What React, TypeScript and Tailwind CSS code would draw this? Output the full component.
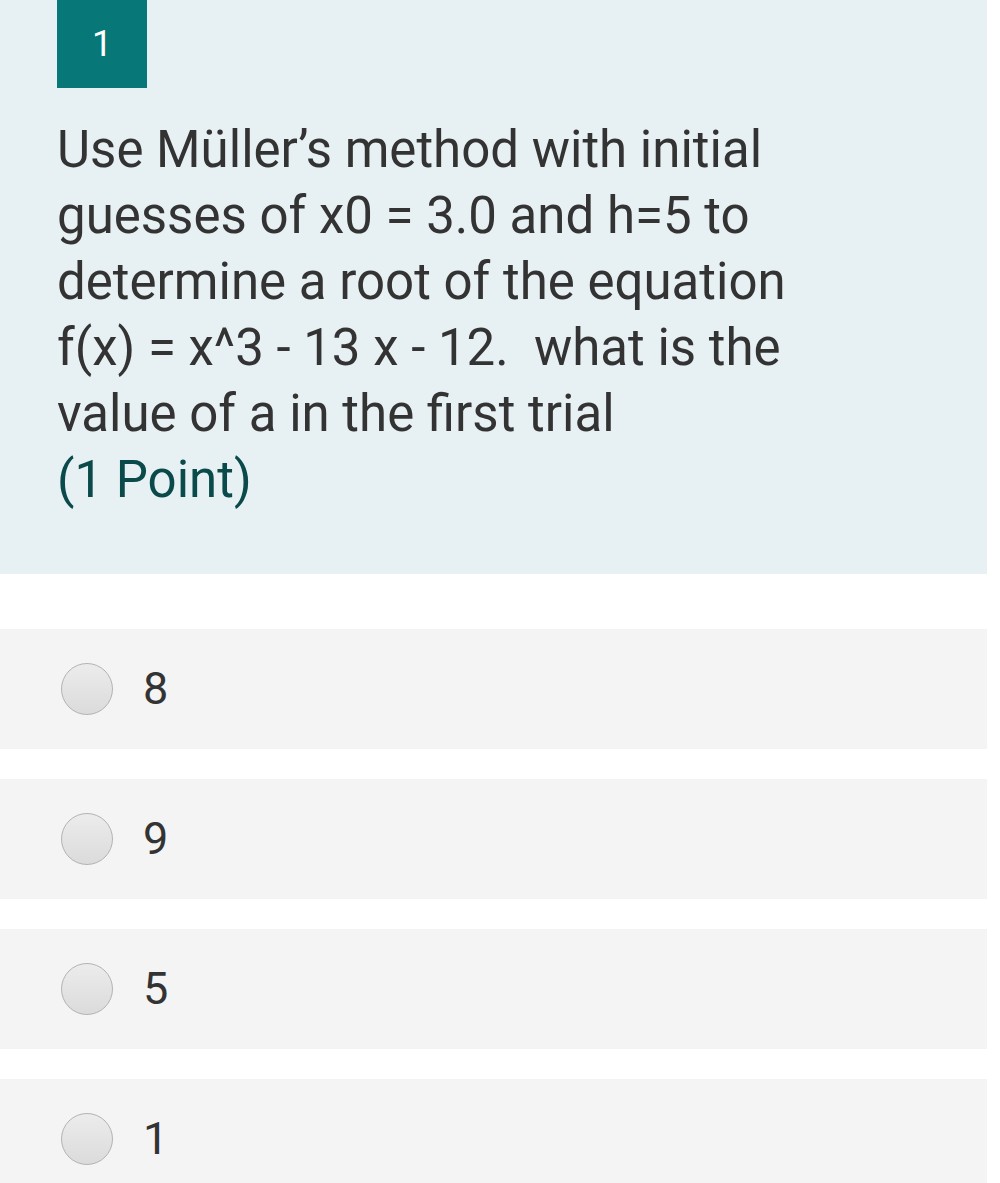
export default function App() {
  const lines = [
    "Use Müller\u2019s method with initial",
    "guesses of x0 = 3.0 and h=5 to",
    "determine a root of the equation",
    "f(x) = x^3 - 13 x - 12.\u00a0 what is the",
    "value of a in the first trial",
  ];
  const options = ["8", "9", "5", "1"];

  return (
    <div className="w-[1000px] h-[1183px] overflow-hidden bg-white font-['Roboto',sans-serif]">
      <div className="w-[987px]">
        <section className="bg-[#e7f0f3] pl-[57px] pb-[61px]">
          <div className="w-[90px] h-[88px] bg-[#077777] flex items-center justify-center text-white text-[36px]">
            1
          </div>
          <div className="mt-[29px] text-[51px] leading-[66px] text-[#333333] whitespace-nowrap">
            {lines.map((l) => (
              <div key={l}>{l}</div>
            ))}
            <div className="text-[#0a4a4a]">(1 Point)</div>
          </div>
        </section>
        <div className="mt-[55px] flex flex-col gap-[30px]">
          {options.map((o) => (
            <Option key={o} label={o} />
          ))}
        </div>
      </div>
    </div>
  );
}

function Option(props: { label: string }) {
  const { label } = props;
  return (
    <div className="h-[120px] bg-[#f4f4f4] flex items-center pl-[61px]">
      <span className="w-[52px] h-[52px] rounded-full border border-[#b3b3b3] bg-gradient-to-b from-[#ececec] to-[#dbdbdb] shrink-0" />
      <span className="ml-[30px] text-[45px] text-[#333333]">{label}</span>
    </div>
  );
}
